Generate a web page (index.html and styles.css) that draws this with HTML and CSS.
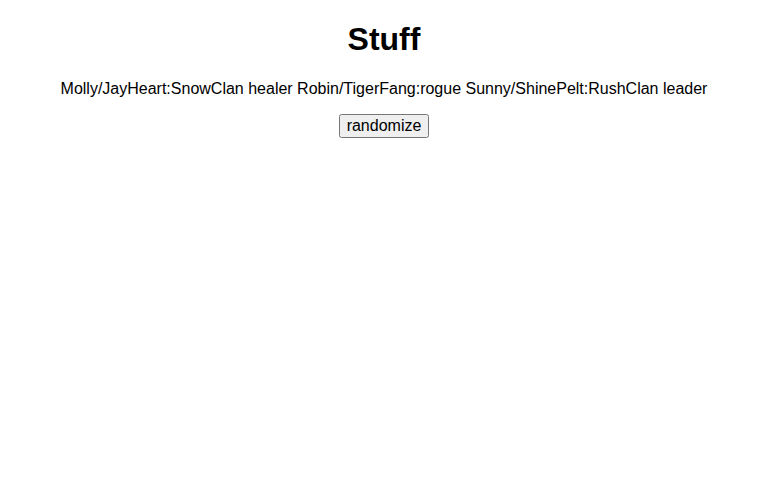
FILE: index.html
```html
<!DOCTYPE html>
<html>
<head>
<meta charset="utf-8">
<link rel="stylesheet" href="styles.css">
</head>
<body class="page">
<h1 class="title">Stuff</h1>
<p class="list">Molly/JayHeart:SnowClan healer Robin/TigerFang:rogue Sunny/ShinePelt:RushClan leader</p>
<button class="btn">randomize</button>
</body>
</html>
```
FILE: styles.css
```css
.page {
  margin: 0;
  text-align: center;
  font-family: "Liberation Sans", Arial, sans-serif;
  color: #000;
  background: #fff;
}
.title {
  font-size: 32px;
  font-weight: bold;
  margin: 21.44px 0;
}
.list {
  font-size: 16px;
  margin: 16px 0;
}
.btn {
  font-family: "Liberation Sans", Arial, sans-serif;
  font-size: 16px;
}
```
